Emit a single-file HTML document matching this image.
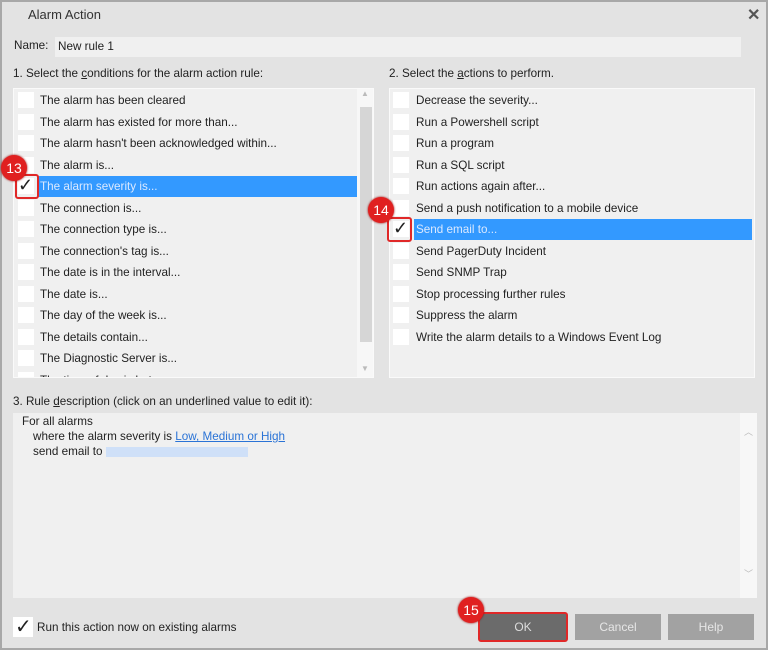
<!DOCTYPE html>
<html><head><style>
*{margin:0;padding:0;box-sizing:border-box}
body{width:768px;height:652px;background:#fff;font-family:"Liberation Sans",sans-serif;font-size:11.7px;color:#222;position:relative;overflow:hidden}
.dlg{position:absolute;left:0;top:0;width:768px;height:650px;background:#e3e3e3;border:2px solid #a8a8a8}
.a{position:absolute;white-space:nowrap}
.list{position:absolute;background:#f0f0f0;border:1px solid #fafafa;overflow:hidden}
.row{position:absolute;left:0;height:21px;line-height:21px;width:100%}
.cb{position:absolute;width:16px;height:16px;background:#fff;top:2px}
.sel{background:#3399ff;color:#dbe9ff}
.ck{position:absolute;font-size:18px;line-height:16px;color:#222}
.badge{position:absolute;width:26px;height:26px;border-radius:50%;background:#e02020;color:#fff;font-size:14px;line-height:26px;text-align:center;box-shadow:0 0 2px #900}
.rb{position:absolute;border:2px solid #e02828;border-radius:3px}
.btn{position:absolute;top:614px;width:86px;height:26px;line-height:26px;text-align:center;color:#e6e6e6;background:#a2a2a2;font-size:12px}
</style></head><body>
<div class="dlg"></div>
<div class="a" style="left:28px;top:7px;font-size:13px;color:#333">Alarm Action</div>
<div class="a" style="left:747px;top:5px;font-size:16px;font-weight:bold;color:#555">✕</div>
<div class="a" style="left:14px;top:39px">Name:</div>
<div class="a" style="left:55px;top:37px;width:686px;height:20px;background:#f0f0f0;padding:3px 3px">New rule 1</div>
<div class="a" style="left:13px;top:67px">1. Select the <u>c</u>onditions for the alarm action rule:</div>
<div class="a" style="left:389px;top:67px">2. Select the <u>a</u>ctions to perform.</div>

<div class="list" style="left:13px;top:88px;width:361px;height:290px">
 <div style="position:absolute;left:343px;top:0;width:16px;height:290px;background:#f7f7f7"></div>
 <div style="position:absolute;left:346px;top:18px;width:12px;height:235px;background:#d6d6d6"></div>
 <div class="a" style="left:347px;top:0;font-size:8px;color:#bbb">▲</div>
 <div class="a" style="left:347px;top:275px;font-size:8px;color:#bbb">▼</div>
 <div class="row" style="top:1px"><div class="cb" style="left:4px"></div><span style="margin-left:26px">The alarm has been cleared</span></div>
 <div class="row" style="top:22.5px"><div class="cb" style="left:4px"></div><span style="margin-left:26px">The alarm has existed for more than...</span></div>
 <div class="row" style="top:44px"><div class="cb" style="left:4px"></div><span style="margin-left:26px">The alarm hasn't been acknowledged within...</span></div>
 <div class="row" style="top:65.5px"><div class="cb" style="left:4px"></div><span style="margin-left:26px">The alarm is...</span></div>
 <div class="row" style="top:87px;width:343px"><div class="cb" style="left:4px"></div><div class="sel" style="position:absolute;left:24px;right:0;top:0;height:21px;padding-left:2px">The alarm severity is...</div></div>
 <div class="row" style="top:108.5px"><div class="cb" style="left:4px"></div><span style="margin-left:26px">The connection is...</span></div>
 <div class="row" style="top:130px"><div class="cb" style="left:4px"></div><span style="margin-left:26px">The connection type is...</span></div>
 <div class="row" style="top:151.5px"><div class="cb" style="left:4px"></div><span style="margin-left:26px">The connection's tag is...</span></div>
 <div class="row" style="top:173px"><div class="cb" style="left:4px"></div><span style="margin-left:26px">The date is in the interval...</span></div>
 <div class="row" style="top:194.5px"><div class="cb" style="left:4px"></div><span style="margin-left:26px">The date is...</span></div>
 <div class="row" style="top:216px"><div class="cb" style="left:4px"></div><span style="margin-left:26px">The day of the week is...</span></div>
 <div class="row" style="top:237.5px"><div class="cb" style="left:4px"></div><span style="margin-left:26px">The details contain...</span></div>
 <div class="row" style="top:259px"><div class="cb" style="left:4px"></div><span style="margin-left:26px">The Diagnostic Server is...</span></div>
 <div class="row" style="top:280.5px"><div class="cb" style="left:4px"></div><span style="margin-left:26px">The time of day is betw</span></div>
</div>
<div class="ck" style="left:18px;top:177px">✓</div>
<div class="rb" style="left:15px;top:174px;width:24px;height:25px"></div>
<div class="badge" style="left:1px;top:155px">13</div>

<div class="list" style="left:389px;top:88px;width:366px;height:290px">
 <div class="row" style="top:1px"><div class="cb" style="left:3px"></div><span style="margin-left:26px">Decrease the severity...</span></div>
 <div class="row" style="top:22.5px"><div class="cb" style="left:3px"></div><span style="margin-left:26px">Run a Powershell script</span></div>
 <div class="row" style="top:44px"><div class="cb" style="left:3px"></div><span style="margin-left:26px">Run a program</span></div>
 <div class="row" style="top:65.5px"><div class="cb" style="left:3px"></div><span style="margin-left:26px">Run a SQL script</span></div>
 <div class="row" style="top:87px"><div class="cb" style="left:3px"></div><span style="margin-left:26px">Run actions again after...</span></div>
 <div class="row" style="top:108.5px"><div class="cb" style="left:3px"></div><span style="margin-left:26px">Send a push notification to a mobile device</span></div>
 <div class="row" style="top:130px"><div class="cb" style="left:3px"></div><div class="sel" style="position:absolute;left:24px;right:2px;top:0;height:21px;padding-left:2px">Send email to...</div></div>
 <div class="row" style="top:151.5px"><div class="cb" style="left:3px"></div><span style="margin-left:26px">Send PagerDuty Incident</span></div>
 <div class="row" style="top:173px"><div class="cb" style="left:3px"></div><span style="margin-left:26px">Send SNMP Trap</span></div>
 <div class="row" style="top:194.5px"><div class="cb" style="left:3px"></div><span style="margin-left:26px">Stop processing further rules</span></div>
 <div class="row" style="top:216px"><div class="cb" style="left:3px"></div><span style="margin-left:26px">Suppress the alarm</span></div>
 <div class="row" style="top:237.5px"><div class="cb" style="left:3px"></div><span style="margin-left:26px">Write the alarm details to a Windows Event Log</span></div>
</div>
<div class="ck" style="left:393px;top:220px">✓</div>
<div class="rb" style="left:387px;top:217px;width:25px;height:25px"></div>
<div class="badge" style="left:368px;top:197px">14</div>

<div class="a" style="left:13px;top:395px">3. Rule <u>d</u>escription (click on an underlined value to edit it):</div>
<div class="a" style="left:13px;top:413px;width:744px;height:185px;background:#f0f0f0">
 <div style="position:absolute;right:0;top:0;width:17px;height:185px;background:#f7f7f7"></div>
 <div class="a" style="right:4px;top:12px;font-size:9px;color:#bbb">︿</div>
 <div class="a" style="right:4px;top:154px;font-size:9px;color:#bbb">﹀</div>
 <div class="a" style="left:9px;top:2px">For all alarms</div>
 <div class="a" style="left:20px;top:17px">where the alarm severity is <span style="color:#2a73d6;text-decoration:underline">Low, Medium or High</span></div>
 <div class="a" style="left:20px;top:32px">send email to <span style="display:inline-block;width:142px;height:10px;background:#cfe0f8;vertical-align:middle"></span></div>
</div>

<div class="a" style="left:13px;top:617px;width:20px;height:20px;background:#fff"></div>
<div class="ck" style="left:15px;top:619px;font-size:20px">✓</div>
<div class="a" style="left:37px;top:621px">Run this action now on existing alarms</div>

<div class="btn" style="left:480px;background:#6b6b6b;color:#ddd">OK</div>
<div class="rb" style="left:478px;top:612px;width:90px;height:30px"></div>
<div class="btn" style="left:575px">Cancel</div>
<div class="btn" style="left:668px">Help</div>
<div class="badge" style="left:458px;top:597px">15</div>
</body></html>
